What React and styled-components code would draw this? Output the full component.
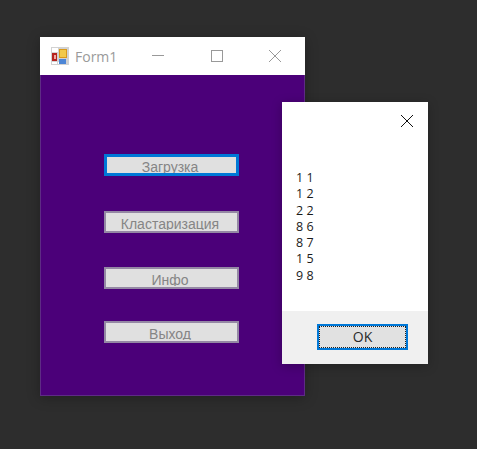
import React from "react";
import styled, { createGlobalStyle } from "styled-components";

const GlobalStyle = createGlobalStyle`
  html, body {
    margin: 0;
    padding: 0;
    background: #2d2d2d;
  }
  body {
    width: 477px;
    height: 449px;
    overflow: hidden;
    font-family: "Liberation Sans", Arial, sans-serif;
  }
`;

const Desktop = styled.div`
  position: relative;
  width: 477px;
  height: 449px;
  background: #2d2d2d;
  overflow: hidden;
`;

const FormWindow = styled.div`
  position: absolute;
  left: 40px;
  top: 37px;
  width: 265px;
  height: 359px;
  box-sizing: border-box;
  display: flex;
  flex-direction: column;
  box-shadow: 0 2px 12px rgba(0, 0, 0, 0.28);
`;

const TitleBar = styled.div`
  height: 38px;
  flex: none;
  display: flex;
  align-items: center;
  background: #ffffff;
  padding-left: 11px;
`;

const AppIcon = styled.svg`
  width: 18px;
  height: 18px;
  flex: none;
`;

const TitleText = styled.span`
  margin-left: 6px;
  font-family: "Open Sans", "Noto Sans", sans-serif;
  font-size: 14px;
  color: #9a9a9a;
  width: 42px;
`;

const Controls = styled.div`
  display: flex;
  margin-left: 12px;
`;

const ControlButton = styled.div`
  width: 58.5px;
  height: 38px;
  display: flex;
  align-items: center;
  justify-content: center;
  svg {
    width: 12px;
    height: 12px;
    display: block;
  }
`;

const FormBody = styled.div`
  flex: 1;
  box-sizing: border-box;
  background: #4b0079;
  border: 1px solid #5e2b85;
  border-top: none;
  padding: 79px 0 0 63px;
  display: flex;
  flex-direction: column;
  align-items: flex-start;
`;

const FormButton = styled.div`
  box-sizing: border-box;
  width: 135px;
  height: 22px;
  margin-bottom: ${(p) => p.$gap}px;
  background: #e0e0e0;
  border: ${(p) => (p.$focused ? "3px solid #0078d7" : "2px solid #9488a4")};
  padding-top: ${(p) => (p.$focused ? 2 : 3)}px;
  padding-right: 3px;
`;

const FormLabel = styled.div`
  height: 14px;
  overflow: hidden;
  color: #858585;
  font-size: 14px;
  line-height: 16px;
  text-align: center;
`;

const Dialog = styled.div`
  position: absolute;
  left: 282px;
  top: 102px;
  width: 146px;
  height: 262px;
  display: flex;
  flex-direction: column;
  background: #ffffff;
  box-shadow: 0 2px 10px rgba(0, 0, 0, 0.25);
`;

const DialogHeader = styled.div`
  height: 38px;
  flex: none;
  display: flex;
  justify-content: flex-end;
  align-items: center;
  padding-right: 15px;
  svg {
    width: 12px;
    height: 12px;
    display: block;
  }
`;

const DialogText = styled.div`
  flex: 1;
  padding: 30px 0 0 14px;
  font-family: "Open Sans", "Noto Sans", sans-serif;
  font-size: 12.5px;
  line-height: 16.3px;
  color: #1a1a1a;
`;

const DialogFooter = styled.div`
  height: 53px;
  flex: none;
  background: #f0f0f0;
  display: flex;
  justify-content: flex-start;
  padding: 13px 0 0 35px;
  box-sizing: border-box;
`;

const OkButton = styled.div`
  box-sizing: border-box;
  width: 91px;
  height: 26px;
  background: #e1e1e1;
  border: 2px solid #0078d7;
  outline: 1px dotted #222;
  outline-offset: -3px;
  font-family: "Open Sans", "Noto Sans", sans-serif;
  font-size: 14px;
  font-weight: 500;
  line-height: 22px;
  text-align: center;
  color: #2a2a2a;
`;

const rows = ["1 1", "1 2", "2 2", "8 6", "8 7", "1 5", "9 8"];

const buttons = [
  { label: "Загрузка", gap: 35, focused: true },
  { label: "Кластаризация", gap: 34 },
  { label: "Инфо", gap: 32 },
  { label: "Выход", gap: 0 },
];

export default function App() {
  return (
    <Desktop>
      <GlobalStyle />
      <FormWindow>
        <TitleBar>
          <AppIcon viewBox="0 0 18 18">
            <rect x="0" y="0" width="18" height="18" fill="#d2d2d2" />
            <rect x="1" y="1" width="6" height="4" fill="#ffffff" />
            <rect x="1" y="15" width="5" height="2" fill="#ffffff" />
            <rect x="7" y="15" width="1" height="2" fill="#ffffff" />
            <rect x="8" y="2" width="8" height="9" fill="#d99a1c" />
            <rect x="9" y="3" width="6" height="7" fill="#f2c94a" />
            <rect x="1" y="6" width="5" height="8" fill="#b5231f" />
            <rect x="3" y="8" width="2" height="4" fill="#f0a8a0" />
            <rect x="8" y="12" width="7" height="5" fill="#4d86d6" />
          </AppIcon>
          <TitleText>Form1</TitleText>
          <Controls>
            <ControlButton>
              <svg viewBox="0 0 12 12">
                <path d="M0 5.5H12" stroke="#999" fill="none" />
              </svg>
            </ControlButton>
            <ControlButton>
              <svg viewBox="0 0 12 12">
                <rect x="0.5" y="0.5" width="11" height="11" stroke="#999" fill="none" />
              </svg>
            </ControlButton>
            <ControlButton>
              <svg viewBox="0 0 12 12">
                <path d="M0 0L12 12M12 0L0 12" stroke="#999" fill="none" />
              </svg>
            </ControlButton>
          </Controls>
        </TitleBar>
        <FormBody>
          {buttons.map((b) => (
            <FormButton key={b.label} $gap={b.gap} $focused={b.focused}>
              <FormLabel>{b.label}</FormLabel>
            </FormButton>
          ))}
        </FormBody>
      </FormWindow>
      <Dialog>
        <DialogHeader>
          <svg viewBox="0 0 12 12">
            <path d="M0 0L12 12M12 0L0 12" stroke="#111" fill="none" />
          </svg>
        </DialogHeader>
        <DialogText>
          {rows.map((r, i) => (
            <div key={i}>{r}</div>
          ))}
        </DialogText>
        <DialogFooter>
          <OkButton>OK</OkButton>
        </DialogFooter>
      </Dialog>
    </Desktop>
  );
}
